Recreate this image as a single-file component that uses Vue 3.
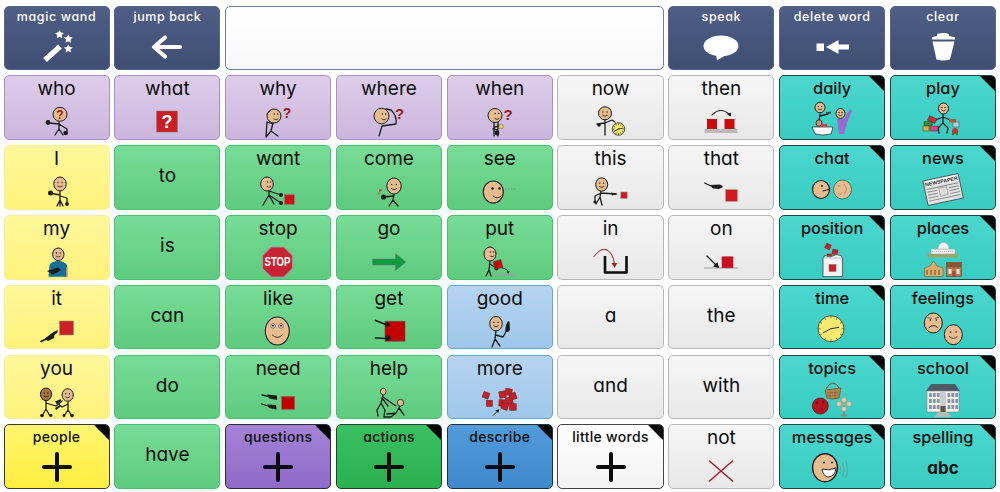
<script setup>
const INK = '#1c1c1c'
const SKIN = '#e8bc8e'
const RED = '#c81e24'
const l = (d, w = 1.3, c = INK) => `<path d="${d}" fill="none" stroke="${c}" stroke-width="${w}" stroke-linecap="round" stroke-linejoin="round"/>`
const f = (d, c = INK) => `<path d="${d}" fill="${c}"/>`
const head = (x, y, r = 7, ry = r, c = SKIN, w = 1) => `<ellipse cx="${x}" cy="${y}" rx="${r}" ry="${ry}" fill="${c}" stroke="${INK}" stroke-width="${w}"/>`
const eyes = (x, y, g = 4, r = 0.7) => `<circle cx="${x - g / 2}" cy="${y}" r="${r}" fill="${INK}"/><circle cx="${x + g / 2}" cy="${y}" r="${r}" fill="${INK}"/>`
const smile = (x, y, w = 3) => l(`M${x - w},${y} Q${x},${y + w} ${x + w},${y}`, 0.8)
const face = (x, y, r = 7, ry = r) => head(x, y, r, ry) + eyes(x, y - ry * 0.2, r * 0.65, 0.7) + smile(x, y + ry * 0.3, r * 0.38)
const sq = (x, y, s, rot = 0, c = RED, b = '#7a2326') => `<rect x="${x}" y="${y}" width="${s}" height="${s}" fill="${c}" stroke="${b}" stroke-width="0.6" transform="rotate(${rot} ${x + s / 2} ${y + s / 2})"/>`
const q = (x, y, s = 15, c = '#9e1620') => `<text x="${x}" y="${y}" font-size="${s}" font-weight="700" text-anchor="middle" fill="${c}" font-family="Liberation Sans, sans-serif">?</text>`
const hand = (x, y, r = 2.2) => `<circle cx="${x}" cy="${y}" r="${r}" fill="${INK}"/>`
const clock = (x, y, r) => {
  let ticks = ''
  for (let i = 0; i < 12; i++) {
    const a = (i * Math.PI) / 6
    ticks += l(`M${(x + Math.cos(a) * (r - 2)).toFixed(1)},${(y + Math.sin(a) * (r - 2)).toFixed(1)} L${(x + Math.cos(a) * (r - 0.6)).toFixed(1)},${(y + Math.sin(a) * (r - 0.6)).toFixed(1)}`, 0.7, '#444')
  }
  return `<circle cx="${x}" cy="${y}" r="${r}" fill="#f6ea6e" stroke="#444" stroke-width="0.9"/>` + ticks + l(`M${x},${y} L${x + r * 0.6},${y - r * 0.1} M${x},${y} L${x - r * 0.6},${y + r * 0.32}`, 0.9)
}
const windows = (x, y, n, m, dx, dy, w, h, c = '#8b95a0') => {
  let s = ''
  for (let i = 0; i < n; i++) for (let j = 0; j < m; j++) s += `<rect x="${x + i * dx}" y="${y + j * dy}" width="${w}" height="${h}" fill="${c}"/>`
  return s
}
function star(x, y, r) {
  let p = ''
  for (let i = 0; i < 10; i++) {
    const a = -Math.PI / 2 + (i * Math.PI) / 5
    const d = i % 2 ? r * 0.5 : r
    p += `${(x + Math.cos(a) * d).toFixed(1)},${(y + Math.sin(a) * d).toFixed(1)} `
  }
  return `<polygon points="${p}" fill="#fff"/>`
}

const icons = {
  wand: l('M23,31 L38,17.5', 5.4, '#fff').replace('stroke-linecap="round"', 'stroke-linecap="butt"') + star(37.5, 5.5, 4.6) + star(46.3, 10, 4.6) + star(46.3, 19.8, 4.6),
  back: l('M22,18 L48,18 M33,8.5 L22,18 L33,27.5', 4.2, '#fff'),
  bubble: `<ellipse cx="35" cy="17" rx="17.5" ry="10.4" fill="#fff"/>` + f('M30,25 L31,31.5 L40,26 Z', '#fff'),
  delword: `<rect x="19.5" y="14.5" width="7.5" height="7.5" fill="#fff"/>` + f('M29,18 L41.5,11 L41.5,15.5 L52,15.5 L52,20.5 L41.5,20.5 L41.5,25 Z', '#fff'),
  trash: f('M24,10.5 L47,10.5 L47,8.2 L41,7 L41,5 Q35,2.8 29,5 L29,7 L24,8.2 Z', '#fff') + f('M24.5,12.5 L46.5,12.5 L42,30.5 Q35,32.5 28.5,30.5 Z', '#fff'),

  who: l('M37,21 L37,29 M37,29 L33,35 M37,29 L41,35 M37,24 L27,23 M37,24 L45,29 L45,34') + hand(26, 22.5, 2.4) + hand(43.5, 33, 2.2) + head(38, 14.3, 7) + q(38, 19, 12, '#a1161f'),
  what: `<rect x="24.5" y="11" width="21" height="21" fill="${RED}" stroke="#8a8080" stroke-width=".6"/>` + q(35, 27.5, 18, '#fff'),
  why: l('M30,23 L28,31 M28,31 L23,37 M28,31 L35,36 M30,24 L24,22 L23,36') + head(31, 16, 7) + eyes(33, 14, 3.5) + smile(33, 19, 2) + l('M24,14 L27,11', 1) + q(44, 18, 14),
  where: l('M37,10 Q43,15 42,24 L28,26 L25,36 M37,10 L32,9') + head(27.5, 16, 7.5, 7.8) + eyes(30, 14, 3.5) + smile(30, 19, 2.2) + q(45.5, 18.5, 15),
  when: l('M29,22 L29,36 M33,22 L33,36 M29,27 L37,26 M33,30 L28,29') + hand(32, 33, 2.4) + `<circle cx="36" cy="26.5" r="2.3" fill="#e9d34f" stroke="#555" stroke-width=".5"/>` + head(30, 15.5, 7) + eyes(32, 13.5, 3.5) + smile(32, 18.5, 2.2) + q(43, 19.5, 15),
  now: l('M29,20 L29,35 M21,24 L29,23 L36,20 L39,22') + hand(23, 25, 1.8) + clock(42.5, 29, 6.3) + face(29, 13.3, 6.5),
  then: `<rect x="18.5" y="29" width="33" height="4" fill="#bbb"/>` + `<rect x="21" y="19" width="10" height="10" fill="#c90d0d"/><rect x="38.5" y="19" width="10" height="10" fill="#c90d0d"/>` + l('M26,15 Q35,6 44,15', 1.1) + f('M45,16.5 L41,14.5 L45,12.5 Z'),
  daily: l('M23,14 L22,21 M23,16 L31,14') + `<rect x="29" y="12" width="5" height="2" fill="#444" transform="rotate(-8 31 13)"/>` + face(23, 7.5, 5, 5.2) + f('M40,19 L47,19 L53,9 L55,11 L50,23 L47,34 L42,34 Z', '#9a6ad2') + face(43.5, 13.5, 4.5, 5) + `<path d="M15,27 H36 L34,34 Q25,36 18,34 Z" fill="#fff" stroke="#333" stroke-width=".8"/>` + head(22, 23, 3, 3.2, '#d9966b', .8) + `<rect x="24" y="24" width="6" height="3" fill="#c44"/>`,
  play: l('M35,14 L35,23 M35,17 L25,21 M35,17 L45,21 M35,23 L30,28 L31,33 M35,23 L40,28 L39,33') + face(35.5, 8.5, 5, 5.5) + `<rect x="16" y="21" width="8" height="5" fill="#3a8a3a" stroke="#222" stroke-width=".4" transform="rotate(-12 20 23)"/><rect x="20" y="17" width="8" height="5" fill="#c7303a" stroke="#222" stroke-width=".4" transform="rotate(25 24 20)"/><rect x="22" y="26" width="8" height="5" fill="#d04b7b" stroke="#222" stroke-width=".4"/><rect x="15" y="26" width="6" height="5" fill="#d8b13a" stroke="#222" stroke-width=".4"/><rect x="45" y="22" width="6" height="5" fill="#bcd" stroke="#444" stroke-width=".5"/><rect x="41" y="19" width="7" height="3.5" fill="#a5603a"/>` + `<circle cx="47" cy="31" r="3" fill="#c7303a"/><circle cx="45" cy="34" r="1.2" fill="#2a7a2a"/><circle cx="49" cy="34" r="1.2" fill="#2a7a2a"/>`,

  i: l('M38,21 L38,36 M38,25 L30,23.5 M38,26 L45,28 L45,34 M38,30 L35,36 M38,30 L41,36') + hand(28.5, 23, 2.5) + hand(45, 34, 1.9) + face(38, 14, 6.2, 7),
  want: l('M26,21 L26,25 L20,35 M26,25 L31,34 M26,21 L38,25 M26,25 L38,33') + hand(38, 25, 2) + hand(38, 33, 2) + head(24, 14, 6.3, 7) + eyes(26, 12, 3) + smile(26, 16.5, 2) + sq(41.5, 24.5, 10, 0, '#cf0f1a', '#888'),
  come: l('M40,24 L39,30 L35,36 M39,30 L44,36 M39,26 L30,27') + hand(29.5, 27, 2.6) + l('M26,21 L24,25', .8, '#b33') + f('M25,19 L28,20 L25.5,22 Z', '#c33') + face(40, 16, 7.2, 8),
  see: head(28.3, 22, 10, 11, SKIN, 1.1) + eyes(31, 18.5, 7, 1.2) + smile(32, 26, 4) + l('M40,19 H50', 0.8, '#777').replace('stroke-linecap="round"', 'stroke-dasharray="1.4 1.6"'),
  this: l('M25,21 L24,27 L20,34 M24,27 L26,35 M25,23 L40,24 M25,23 L19,26 L19,31') + f('M35,22.5 L42,24 L36,25.5 Z') + hand(19, 32, 1.6) + sq(44.8, 22, 6.4, 0, '#cf1a22', '#999') + face(25.7, 14.5, 6, 6.7),
  that: l('M18.5,13 L25,16 L36,16', 1.1) + f('M24,15 L34,14.6 L37,17 L33,19 L27,18.5 Z') + sq(39.5, 19.5, 12, 0, '#cf1a22', '#aaa'),
  chat: head(24, 19.5, 8.5, 9, SKIN, 1.2) + `<circle cx="25" cy="16" r=".9" fill="${INK}"/>` + l('M33,19 L26,21', 1) + head(45.5, 19.5, 9, 9.5, '#e6bb90', .5) + l('M41,16 h2 M47,14 q5,5 0,10 M41,24 q3,1 4,-1', .6, '#9a7b5c'),
  news: `<g transform="rotate(-12 35 19)"><rect x="17" y="7" width="36" height="25" fill="#e3e3e3" stroke="#444" stroke-width=".8"/><rect x="19" y="8" width="32" height="5.5" fill="#fff"/><text x="35" y="13" text-anchor="middle" font-size="5.2" font-weight="700" fill="#222" font-family="Liberation Sans, sans-serif">NEWSPAPER</text><path d="M19,16 H51 M19,19 H29 M41,19 H51 M19,22 H29 M41,22 H51 M19,25 H29 M41,25 H51 M19,28 H51" stroke="#888" stroke-width="1"/><rect x="31" y="17.5" width="8" height="8" fill="#ddd" stroke="#888" stroke-width=".6"/></g>`,

  my: f('M26.5,36.8 L27.5,25 Q30,21 36,21 Q42,21 45,25 L45.5,36.8 Z', '#156f94') + l('M45,28 L45,36.5', 1.4, '#d8a477') + f('M25,31 L36,27.5 L39,30 L36,32 L31,34.5 Z') + face(36.3, 14.3, 5.7, 6.3),
  stop: `<path d="M28,7 H41 L49.5,15.5 V28.5 L41,37 H28 L19.5,28.5 V15.5 Z" fill="#c92233" stroke="#999" stroke-width="1.2"/><text x="34.5" y="26.3" text-anchor="middle" font-size="12" font-weight="700" fill="#fff" font-family="Liberation Sans, sans-serif" textLength="26" lengthAdjust="spacingAndGlyphs">STOP</text>`,
  go: `<path d="M18.5,19 H41.5 V13.5 L52,22 L41.5,30.5 V25 H18.5 Z" fill="#0f9b40" stroke="#777" stroke-width=".5"/>`,
  put: l('M25,21 L24,30 L21,36 M24,30 L26,36 M25,24 L31,28') + hand(31.5, 28.5, 2) + sq(29,20.5,8,-15,'#c00','#555') + l('M37,28 Q42,28 43,32', .8) + f('M41.5,32 L44.5,31 L43.6,34 Z') + l('M28,35.5 H50.5', 1.6, '#b58ab4').replace('stroke-linecap="round"', 'stroke-dasharray="1.5 .6"') + head(25, 14, 6, 7) + eyes(27, 12, 3) + smile(27, 16, 1.8),
  in: l('M29,16 V32.5 H50.5 V16', 2.6, '#0d0d0d').replace('stroke-linecap="round"', 'stroke-linecap="butt"') + l('M18,16.5 Q25,7 31,10 Q37,13 38.5,24', 1, '#a71b1f') + f('M35.5,23 L41,23 L38.8,28 Z', '#a71b1f'),
  on: l('M18.5,28 H51.5', 1.2, '#9a9a9a') + sq(36,16.8,11,0,'#c8101e','#b23') + l('M21,16 L32,27', 1.3) + f('M33,28 L27,26.5 L31.5,22 Z'),
  position: sq(28.5,4,5,25,'#c9232a','#822') + sq(35.5,9.5,5,10,'#c9232a','#822') + sq(30,14,4.5,0,'#c9232a','#822') + `<path d="M26,18 L28,15.5 L33,17 L39,14.5 L44,15.5 L45.5,18 V36.5 H26 Z" fill="#f3f3f3" stroke="#5d6b6b" stroke-width="1.1"/><path d="M26,18 H45.500" stroke="#9aa" stroke-width=".7"/><rect x="32" y="24.5" width="7" height="7" fill="#cf1a22" stroke="#777" stroke-width=".5"/>`,
  places: `<rect x="19.5" y="13.5" width="31" height="4" fill="#99a56a"/><rect x="23" y="9" width="24" height="5" fill="#eee" stroke="#999" stroke-width=".4"/><path d="M30,9 Q30,3 35.5,2.5 Q41,3 41,9 Z" fill="#f7f7f7" stroke="#999" stroke-width=".4"/><path d="M24,11.5 H46" stroke="#aaa" stroke-width=".6" stroke-dasharray="1 1"/><path d="M16.5,36.5 V28 L22,26 L25.5,21 L29,26 L35,28 V36.5 Z" fill="#dcab6a" stroke="#6b4a30" stroke-width=".5"/><path d="M19,30 V35 M23,30 V35 M27,30 V35 M31,30 V35" stroke="#704c2c" stroke-width="1"/><rect x="38.5" y="22.5" width="15" height="14" fill="#b9784a" stroke="#533" stroke-width=".5"/><rect x="38.5" y="22.5" width="15" height="5" fill="#8a5736"/><rect x="40.5" y="29" width="3" height="5" fill="#eed"/><rect x="48.5" y="29" width="3" height="5" fill="#eed"/><rect x="44.5" y="31" width="3" height="5.5" fill="#c33"/>`,

  it: sq(37.5,11,14,0,'#cc2029','#9a8a70') + l('M19,31.5 L26,28', 1.6) + f('M23,28.500 L30,23 L35.5,20 L35.5,22.5 L32.5,25 L32,28 L26,31 Z'),
  like: head(34.3, 21, 12, 14, SKIN, 1.1) + `<circle cx="30" cy="16" r="2.2" fill="#fff" stroke="${INK}" stroke-width=".6"/><circle cx="38" cy="16" r="2.2" fill="#fff" stroke="${INK}" stroke-width=".6"/><circle cx="30" cy="15.8" r="1" fill="${INK}"/><circle cx="38" cy="15.8" r="1" fill="${INK}"/>` + smile(34.3, 25, 5),
  get: sq(31,11.2,20,0,'#c40000','#555') + l('M21.5,10.5 L33,15 M21.5,28 L33,28.5', 1.7) + hand(33.5, 14.5, 2.2) + hand(34,28,2.8),
  good: l('M31,20.5 L30,29 L27,37 M30,29 L35,36 M30.5,25 L38,27 L42,20') + f('M40,22 L41,15 L43,11 L44.5,12 L45,20 L43,22 Z') + face(31, 13.7, 6.3, 7.2),
  time: clock(34, 18.7, 13),
  feelings: head(25.3, 13, 9, 10) + eyes(25.3, 10, 6, .8) + l('M21,17.5 Q25.3,13.5 29.5,17.5', .9) + l('M20,7.5 L23.5,8.5 M27,8.5 L30.5,7.5', .6) + head(45.3, 24.7, 9, 10) + eyes(45.3, 22, 5.5, .8) + smile(45.3, 26.5, 4),

  you: l('M24,20 L24,29 L20,36 M24,29 L28,36 M24,23 L34,26 L40,21 M46,21 L46,30 L42,36 M46,30 L50,36 M46,24 L40,27 L35,23') + hand(20,35.5,1.8) + hand(29,35.5,1.4) + hand(42,35.5,1.4) + hand(50,35.5,1.8) + f('M33,21.5 L39,19 L39,21 L35,24 Z') + f('M33,28 L38,25 L38,27 L34,30 Z') + face(24, 14.3, 5.6, 6.3).replace(SKIN, '#a9743d') + face(45.7, 15, 5.6, 6.3),
  need: l('M19,15 L33,18 M18.5,24 L32,28', 1.3) + f('M24,14.500 L34,15.500 L34,20 L26,18.500 Z') + f('M24,24.500 L33,25 L33.500,29.500 L26,28 Z') + sq(38.5,16.3,13.2,0,'#c40000','#777'),
  help: l('M29,15 L27,23 L23,30 L24,36 M27,23 L31,30 L30,36 M29,17 L39,24 L42,26 M28,18 L34,26') + head(29.3, 11.5, 2.8, 3.3, SKIN, .8) + l('M46,26 L42,33 L33,34 M42,33 L37,37 L30,37 M45,28 L50,35') + head(46.5, 22.7, 3.1, 3.4, SKIN, .8),
  more: sq(18,12.3,6,20) + sq(21.3,20.3,6,0) + sq(34.3,11.3,6.5,-10) + sq(40.3,8.7,6.5,10) + sq(44.7,13,6.5,-20) + sq(34,19.7,6.5,5) + sq(41,17.3,6.5,-15) + sq(36.7,23,6.5,20) + sq(44.7,23.7,6.5,0) + l('M28.3,35.3 L33,30.500',.9) + f('M34.3,29.3 L30.3,30.3 L33.2,33 Z'),
  topics: `<path d="M29,9 Q36,-3 43,9" fill="none" stroke="#6b4a2a" stroke-width="1"/><path d="M28,10 L44,8 L42,18 Q35,20 30,18 Z" fill="#b78a4e" stroke="#5d4022" stroke-width=".6"/><path d="M30,13 L43,12 M30,16 L42,15 M33,9 V19 M38,9 V19" stroke="#71502a" stroke-width=".5"/><circle cx="23.3" cy="26" r="8" fill="#b7141f" stroke="#5a2020" stroke-width=".8"/><circle cx="20" cy="23" r="1.2" fill="#6e1116"/><circle cx="26" cy="22" r="1.2" fill="#6e1116"/><circle cx="25" cy="29" r="1.2" fill="#6e1116"/>` + l('M47,26 L47,35', 1.2, '#777') + `<ellipse cx="47" cy="35.5" rx="3.4" ry="1.3" fill="#8b8b8b"/><circle cx="47" cy="20" r="2.4" fill="#f2c9a0" stroke="#a87" stroke-width=".4"/><circle cx="52" cy="24" r="2.4" fill="#f2c9a0" stroke="#a87" stroke-width=".4"/><circle cx="42" cy="24" r="2.4" fill="#f2c9a0" stroke="#a87" stroke-width=".4"/><circle cx="47" cy="29" r="2.4" fill="#f2c9a0" stroke="#a87" stroke-width=".4"/><circle cx="47" cy="24" r="1.5" fill="#c96"/>`,
  school: `<path d="M18,11 L23,4 L47,4 L52,11 Z" fill="#4f5a68"/><rect x="19" y="11" width="32" height="21" fill="#f1f1ea" stroke="#777" stroke-width=".5"/>` + windows(21, 13, 3, 3, 3.9, 6, 2.8, 4) + windows(39.5, 13, 3, 3, 3.9, 6, 2.8, 4) + `<rect x="32" y="11" width="6" height="21" fill="#c8cdd0"/><rect x="32.5" y="26" width="5" height="6" fill="#5d5548"/><path d="M31,32 H39 L44,37 H26 Z" fill="#b9b9b9"/>`,

  plus: l('M22,18 H48 M35,5 V31', 4, '#0c0c0c'),
  cross: l('M23.5,12 L46.5,32 M46.5,12 L23.5,32', 1.5, '#ab1f24'),
  msg: head(28, 18.7, 12.4, 14, SKIN, 1.4) + eyes(31, 13.5, 8, 1) + `<path d="M25,20 Q32,22 39,19 Q38,28 31,28 Q26,27 25,20 Z" fill="#fff" stroke="${INK}" stroke-width=".9"/>` + l('M43,16 Q45,20 43,25 M46,14 Q48.500,20 46,27 M49,12 Q52,20 49,29', .6, '#6c8f8c'),
  abc: `<text x="35" y="25" text-anchor="middle" font-size="17" font-weight="700" fill="#111" font-family="Inter, sans-serif" style="font-feature-settings:'cv11'">abc</text>`,
}

const c = (label, tone, icon, extra = '') => ({ label, tone, icon, extra })
const cells = [
  c('magic wand', 'nav', 'wand'), c('jump back', 'nav', 'back'), { box: true },
  c('speak', 'nav', 'bubble'), c('delete word', 'nav', 'delword'), c('clear', 'nav', 'trash'),

  c('who', 'purple', 'who'), c('what', 'purple', 'what'), c('why', 'purple', 'why'), c('where', 'purple', 'where'), c('when', 'purple', 'when'),
  c('now', 'gray', 'now'), c('then', 'gray', 'then'), c('daily', 'teal', 'daily', 'folder'), c('play', 'teal', 'play', 'folder'),

  c('I', 'yellow', 'i'), c('to', 'green'), c('want', 'green', 'want'), c('come', 'green', 'come'), c('see', 'green', 'see'),
  c('this', 'gray', 'this'), c('that', 'gray', 'that'), c('chat', 'teal', 'chat', 'folder'), c('news', 'teal', 'news', 'folder'),

  c('my', 'yellow', 'my'), c('is', 'green'), c('stop', 'green', 'stop'), c('go', 'green', 'go'), c('put', 'green', 'put'),
  c('in', 'gray', 'in'), c('on', 'gray', 'on'), c('position', 'teal', 'position', 'folder'), c('places', 'teal', 'places', 'folder'),

  c('it', 'yellow', 'it'), c('can', 'green'), c('like', 'green', 'like'), c('get', 'green', 'get'), c('good', 'blue', 'good'),
  c('a', 'gray'), c('the', 'gray'), c('time', 'teal', 'time', 'folder'), c('feelings', 'teal', 'feelings', 'folder'),

  c('you', 'yellow', 'you'), c('do', 'green'), c('need', 'green', 'need'), c('help', 'green', 'help'), c('more', 'blue', 'more'),
  c('and', 'gray'), c('with', 'gray'), c('topics', 'teal', 'topics', 'folder'), c('school', 'teal', 'school', 'folder'),

  c('people', 'yellow-s', 'plus', 'folder small'), c('have', 'green'), c('questions', 'purple-s', 'plus', 'folder small'),
  c('actions', 'green-s', 'plus', 'folder small'), c('describe', 'blue-s', 'plus', 'folder small'), c('little words', 'white-s', 'plus', 'folder small'),
  c('not', 'gray', 'cross'), c('messages', 'teal', 'msg', 'folder'), c('spelling', 'teal', 'abc', 'folder'),
]
</script>

<template>
  <main class="board">
    <template v-for="(cell, i) in cells" :key="i">
      <div v-if="cell.box" class="message"></div>
      <button v-else class="cell" :class="[cell.tone, cell.extra, { plain: !cell.icon }]">
        <span class="label">{{ cell.label }}</span>
        <svg v-if="cell.icon" class="icon" viewBox="0 0 70 40" width="70" height="40" v-html="icons[cell.icon]"></svg>
      </button>
    </template>
  </main>
</template>

<style>
html, body { margin: 0; background: #fff; }
</style>

<style scoped>
.board {
  box-sizing: border-box;
  width: 1000px;
  height: 492px;
  padding: 5.7px 4px 3px 3.5px;
  display: grid;
  grid-template-columns: repeat(9, 1fr);
  grid-template-rows: repeat(7, 1fr);
  gap: 5.2px 4.7px;
  background: #fff;
  overflow: hidden;
}
.message {
  grid-column: span 4;
  border: 1.4px solid #6f7da3;
  border-radius: 5px;
  background: linear-gradient(#fff, #f8f8f8);
}
.cell {
  position: relative;
  box-sizing: border-box;
  min-width: 0;
  min-height: 0;
  margin: 0;
  padding: 0;
  border: 1.3px solid #999;
  border-radius: 5px;
  display: flex;
  flex-direction: column;
  align-items: center;
  overflow: hidden;
  color: #0d0d0d;
  font-family: Inter, "Liberation Sans", sans-serif;
  font-feature-settings: "cv11";
}
.label {
  height: 23px;
  line-height: 26px;
  font-size: 19px;
  font-weight: 400;
  white-space: nowrap;
}
.plain .label { margin-top: 17px; }
.icon { flex: none; margin-top: 1px; display: block; }
.nav { background: linear-gradient(#4e5e85, #3f4e72); border-color: #56668c; color: #fff; }
.nav .label { line-height: 19px; font-size: 12.5px; font-weight: 500; letter-spacing: 0.6px; }
.purple { background: linear-gradient(#ddcdea, #cbb6dd); border-color: #a88fc5; }
.yellow { background: linear-gradient(#fff79a, #fff27c); border-color: #f5ef9f; }
.green { background: linear-gradient(#78dc97, #5ecb7e); border-color: #48c06f; }
.gray { background: linear-gradient(#f6f6f6, #e8e8e8); border-color: #b7b7b7; }
.blue { background: linear-gradient(#b6d4f1, #9fc7ea); border-color: #62a5df; }
.teal { background: linear-gradient(#4cd7cd, #38ccc1); border-color: #1d4644; }
.teal .label { font-size: 16.4px; font-weight: 450; line-height: 24px; }
.yellow-s { background: linear-gradient(#fff670, #ffee3f); border-color: #3a3a3a; }
.purple-s { background: linear-gradient(#a383d7, #8f6ac8); border-color: #2f2a3a; }
.green-s { background: linear-gradient(#3ac062, #2bb050); border-color: #26402f; }
.blue-s { background: linear-gradient(#519bda, #3f88cc); border-color: #1c3043; }
.white-s { background: linear-gradient(#fff, #f3f3f3); border-color: #444; }
.small .label { line-height: 23px; font-size: 14px; font-weight: 450; letter-spacing: 0.3px; }
.folder::after {
  content: "";
  position: absolute;
  top: -1px;
  right: -1px;
  border-style: solid;
  border-width: 0 17px 17px 0;
  border-color: transparent #060606 transparent transparent;
}
</style>
